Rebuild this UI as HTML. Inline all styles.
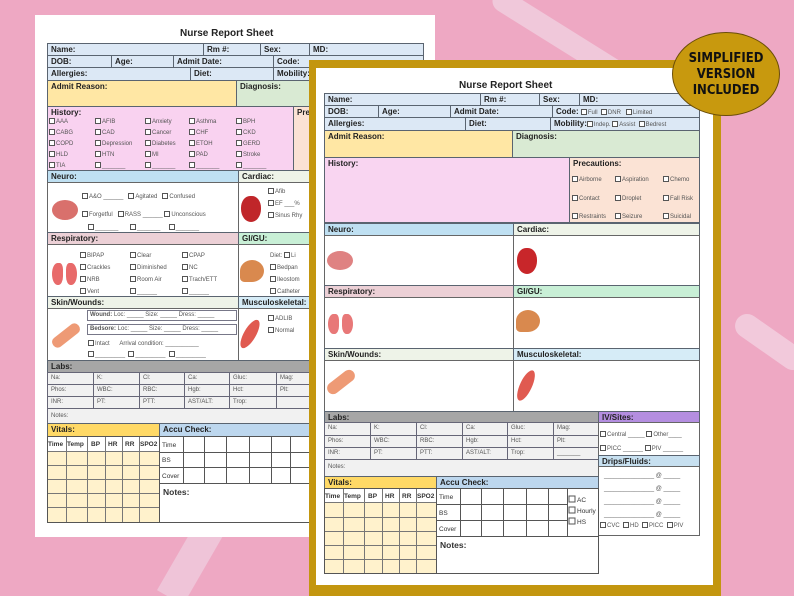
<!DOCTYPE html><html><head><meta charset="utf-8"><style>
*{margin:0;padding:0;box-sizing:border-box}
html,body{width:794px;height:596px;overflow:hidden}
body{background:#eea8c3;position:relative;font-family:"Liberation Sans",sans-serif;color:#222}
.a{position:absolute}
.b{position:absolute;border:1px solid #5a6470;font-size:8px;font-weight:bold;padding:1px 3px;line-height:9px;white-space:nowrap;overflow:hidden}
.s{position:absolute;font-size:6px;color:#555;white-space:nowrap;line-height:7px}
.c{display:inline-block;width:6px;height:6px;border:1px solid #555;margin-right:1px;vertical-align:-1px;background:#fff}
.l{position:absolute;border:1px solid #667;background:#f1f1f1;font-size:6px;color:#555;padding:1px 3px;line-height:9px}
.g{position:absolute;border:1px solid #666}
</style></head><body>
<!-- tubes -->
<div class="a" style="left:500px;top:-14px;width:190px;height:22px;background:#f0c8da;transform:rotate(32deg);transform-origin:0 0;border-radius:11px"></div>
<div class="a" style="left:730px;top:330px;width:80px;height:24px;background:#f2c9db;transform:rotate(35deg);border-radius:12px"></div>
<div class="a" style="left:150px;top:548px;width:80px;height:30px;background:#efc4d8;transform:rotate(-60deg)"></div>

<!-- BACK SHEET -->
<div class="a" style="left:35px;top:15px;width:400px;height:522px;background:#fff"></div>
<div class="a" style="left:180px;top:28px;font-size:10px;font-weight:bold">Nurse Report Sheet</div>
<div class="b" style="left:47px;top:43px;width:157px;height:13px;background:#dce8f5">Name:</div>
<div class="b" style="left:203px;top:43px;width:58px;height:13px;background:#dce8f5">Rm #:</div>
<div class="b" style="left:260px;top:43px;width:50px;height:13px;background:#dce8f5">Sex:</div>
<div class="b" style="left:309px;top:43px;width:115px;height:13px;background:#dce8f5">MD:</div>
<div class="b" style="left:47px;top:55px;width:65px;height:13px;background:#dce8f5">DOB:</div>
<div class="b" style="left:111px;top:55px;width:63px;height:13px;background:#dce8f5">Age:</div>
<div class="b" style="left:173px;top:55px;width:101px;height:13px;background:#dce8f5">Admit Date:</div>
<div class="b" style="left:273px;top:55px;width:151px;height:13px;background:#dce8f5">Code:</div>
<div class="b" style="left:47px;top:67px;width:144px;height:14px;background:#dce8f5">Allergies:</div>
<div class="b" style="left:190px;top:67px;width:84px;height:14px;background:#dce8f5">Diet:</div>
<div class="b" style="left:273px;top:67px;width:151px;height:14px;background:#dce8f5">Mobility:</div>
<div class="b" style="left:47px;top:80px;width:190px;height:27px;background:#ffe7a4">Admit Reason:</div>
<div class="b" style="left:236px;top:80px;width:188px;height:27px;background:#d9ead3">Diagnosis:</div>
<div class="b" style="left:47px;top:106px;width:247px;height:65px;background:#f9d2f0">History:</div>
<div class="b" style="left:293px;top:106px;width:131px;height:65px;background:#fbe2d4">Precautions:</div>
<div class="s" style="left:49px;top:117px;line-height:11px">
<span class="c"></span>AAA<br><span class="c"></span>CABG<br><span class="c"></span>COPD<br><span class="c"></span>HLD<br><span class="c"></span>TIA</div>
<div class="s" style="left:95px;top:117px;line-height:11px"><span class="c"></span>AFIB<br><span class="c"></span>CAD<br><span class="c"></span>Depression<br><span class="c"></span>HTN<br><span class="c"></span>_______</div>
<div class="s" style="left:145px;top:117px;line-height:11px"><span class="c"></span>Anxiety<br><span class="c"></span>Cancer<br><span class="c"></span>Diabetes<br><span class="c"></span>MI<br><span class="c"></span>_______</div>
<div class="s" style="left:189px;top:117px;line-height:11px"><span class="c"></span>Asthma<br><span class="c"></span>CHF<br><span class="c"></span>ETOH<br><span class="c"></span>PAD<br><span class="c"></span>_______</div>
<div class="s" style="left:236px;top:117px;line-height:11px"><span class="c"></span>BPH<br><span class="c"></span>CKD<br><span class="c"></span>GERD<br><span class="c"></span>Stroke<br><span class="c"></span>_______</div>
<div class="b" style="left:47px;top:170px;width:192px;height:13px;background:#bfe0f2">Neuro:</div>
<div class="b" style="left:238px;top:170px;width:186px;height:13px;background:#eef3e8">Cardiac:</div>
<div class="g" style="left:47px;top:182px;width:192px;height:51px"></div>
<div class="g" style="left:238px;top:182px;width:186px;height:51px"></div>
<div class="s" style="left:82px;top:188px;line-height:18px"><span class="c"></span>A&amp;O ______ &nbsp; <span class="c"></span>Agitated &nbsp; <span class="c"></span>Confused<br><span class="c"></span>Forgetful &nbsp; <span class="c"></span>RASS ______ <span class="c"></span>Unconscious</div>
<div class="s" style="left:88px;top:224px"><span class="c"></span>_______ &nbsp;&nbsp;&nbsp;&nbsp;&nbsp;&nbsp;<span class="c"></span>_______ &nbsp;&nbsp;&nbsp;&nbsp;<span class="c"></span>_______</div>
<div class="s" style="left:268px;top:186px;line-height:12px"><span class="c"></span>Afib<br><span class="c"></span>EF ___%<br><span class="c"></span>Sinus Rhy</div>
<div class="a" style="left:52px;top:200px;width:26px;height:20px;border-radius:50%;background:#d9706c"></div>
<div class="a" style="left:241px;top:196px;width:20px;height:26px;border-radius:45% 45% 50% 50%;background:#c0262a"></div>
<div class="b" style="left:47px;top:232px;width:192px;height:13px;background:#ecd0d6">Respiratory:</div>
<div class="b" style="left:238px;top:232px;width:186px;height:13px;background:#c8efd6">GI/GU:</div>
<div class="g" style="left:47px;top:244px;width:192px;height:53px"></div>
<div class="g" style="left:238px;top:244px;width:186px;height:53px"></div>
<div class="s" style="left:80px;top:250px;line-height:12px"><span class="c"></span>BIPAP<br><span class="c"></span>Crackles<br><span class="c"></span>NRB<br><span class="c"></span>Vent</div>
<div class="s" style="left:130px;top:250px;line-height:12px"><span class="c"></span>Clear<br><span class="c"></span>Diminished<br><span class="c"></span>Room Air<br><span class="c"></span>______</div>
<div class="s" style="left:182px;top:250px;line-height:12px"><span class="c"></span>CPAP<br><span class="c"></span>NC<br><span class="c"></span>Trach/ETT<br><span class="c"></span>______</div>
<div class="s" style="left:270px;top:250px;line-height:12px">Diet: <span class="c"></span>Li<br><span class="c"></span>Bedpan<br><span class="c"></span>Ileostom<br><span class="c"></span>Catheter</div>
<div class="a" style="left:52px;top:263px;width:11px;height:22px;border-radius:50% 30% 40% 50%;background:#e86a6a"></div>
<div class="a" style="left:66px;top:263px;width:11px;height:22px;border-radius:30% 50% 50% 40%;background:#e86a6a"></div>
<div class="a" style="left:240px;top:260px;width:24px;height:22px;border-radius:50% 50% 50% 20%;background:#d9894e"></div>
<div class="b" style="left:47px;top:296px;width:192px;height:13px;background:#eef3e8">Skin/Wounds:</div>
<div class="b" style="left:238px;top:296px;width:186px;height:13px;background:#d6ecf7">Musculoskeletal:</div>
<div class="g" style="left:47px;top:308px;width:192px;height:53px"></div>
<div class="g" style="left:238px;top:308px;width:186px;height:53px"></div>
<div class="s" style="left:87px;top:310px;border:1px solid #778;padding:1px 2px;width:150px"><b>Wound:</b> Loc: _____ Size: _____ Dress: _____</div>
<div class="s" style="left:87px;top:324px;border:1px solid #778;padding:1px 2px;width:150px"><b>Bedsore:</b> Loc: _____ Size: _____ Dress: _____</div>
<div class="s" style="left:88px;top:339px;line-height:11px"><span class="c"></span>Intact &nbsp;&nbsp;&nbsp;&nbsp; Arrival condition: __________<br><span class="c"></span>_________ &nbsp;<span class="c"></span>_________ &nbsp;<span class="c"></span>_________</div>
<div class="s" style="left:268px;top:313px;line-height:12px"><span class="c"></span>ADLIB<br><span class="c"></span>Normal</div>
<div class="a" style="left:50px;top:330px;width:32px;height:11px;border-radius:5px;background:#ee9a75;transform:rotate(-38deg)"></div>
<div class="a" style="left:244px;top:318px;width:12px;height:32px;border-radius:50%;background:#e05a50;transform:rotate(30deg)"></div>
<div class="b" style="left:47px;top:360px;width:377px;height:13px;background:#a6a6a6">Labs:</div>
<div class="l" style="left:47px;top:372px;width:47px;height:13px">Na:</div><div class="l" style="left:93px;top:372px;width:47px;height:13px">K:</div><div class="l" style="left:139px;top:372px;width:46px;height:13px">Cl:</div><div class="l" style="left:184px;top:372px;width:46px;height:13px">Ca:</div><div class="l" style="left:229px;top:372px;width:48px;height:13px">Gluc:</div><div class="l" style="left:276px;top:372px;width:48px;height:13px">Mag:</div>
<div class="l" style="left:47px;top:384px;width:47px;height:13px">Phos:</div><div class="l" style="left:93px;top:384px;width:47px;height:13px">WBC:</div><div class="l" style="left:139px;top:384px;width:46px;height:13px">RBC:</div><div class="l" style="left:184px;top:384px;width:46px;height:13px">Hgb:</div><div class="l" style="left:229px;top:384px;width:48px;height:13px">Hct:</div><div class="l" style="left:276px;top:384px;width:48px;height:13px">Plt:</div>
<div class="l" style="left:47px;top:396px;width:47px;height:13px">INR:</div><div class="l" style="left:93px;top:396px;width:47px;height:13px">PT:</div><div class="l" style="left:139px;top:396px;width:46px;height:13px">PTT:</div><div class="l" style="left:184px;top:396px;width:46px;height:13px">AST/ALT:</div><div class="l" style="left:229px;top:396px;width:48px;height:13px">Trop:</div><div class="l" style="left:276px;top:396px;width:48px;height:13px"></div>
<div class="l" style="left:47px;top:408px;width:377px;height:16px;line-height:12px">Notes:</div>
<div class="b" style="left:47px;top:423px;width:113px;height:14px;background:#ffd966">Vitals:</div>
<div class="b" style="left:159px;top:423px;width:265px;height:14px;background:#bdd7ee">Accu Check:</div>
<svg class="a" style="left:47px;top:436px" width="113" height="87">
<rect x="0" y="0" width="113" height="87" fill="#fff2cc"/><rect x="0" y="0" width="113" height="15" fill="#fff"/>
<g stroke="#777" fill="none"><path d="M19.5 0V87M40.5 0V87M58.5 0V87M75.5 0V87M92.5 0V87M0 15.5H113M0 29.5H113M0 43.5H113M0 57.5H113M0 71.5H113"/><rect x="0.5" y="0.5" width="112" height="86" stroke="#555"/></g>
<g font-family="Liberation Sans" font-size="6.5" font-weight="bold" fill="#333"><text x="1" y="10">Time</text><text x="20" y="10">Temp</text><text x="44" y="10">BP</text><text x="61" y="10">HR</text><text x="78" y="10">RR</text><text x="93" y="10">SPO2</text></g></svg>
<svg class="a" style="left:159px;top:436px" width="265" height="87">
<g stroke="#555" fill="none"><path d="M24.5 0V47M45.5 0V47M67.5 0V47M90.5 0V47M112.5 0V47M131.5 0V47M0 16.5H265M0 31.5H265M0 47.5H265"/><rect x="0.5" y="0.5" width="264" height="86"/></g>
<g font-family="Liberation Sans" font-size="6.5" fill="#333"><text x="3" y="11">Time</text><text x="3" y="26">BS</text><text x="3" y="42">Cover</text><text x="4" y="59" font-size="8.5" font-weight="bold">Notes:</text></g></svg>

<!-- FRONT SHEET -->
<div class="a" style="left:309px;top:60px;width:412px;height:536px;background:#c3960f"></div>
<div class="a" style="left:316px;top:68px;width:397px;height:517px;background:#fff"></div>
<div class="a" style="left:459px;top:80px;font-size:10px;font-weight:bold">Nurse Report Sheet</div>
<div class="b" style="left:324px;top:93px;width:157px;height:13px;background:#dce8f5">Name:</div>
<div class="b" style="left:480px;top:93px;width:60px;height:13px;background:#dce8f5">Rm #:</div>
<div class="b" style="left:539px;top:93px;width:41px;height:13px;background:#dce8f5">Sex:</div>
<div class="b" style="left:579px;top:93px;width:121px;height:13px;background:#dce8f5">MD:</div>
<div class="b" style="left:324px;top:105px;width:55px;height:13px;background:#dce8f5">DOB:</div>
<div class="b" style="left:378px;top:105px;width:73px;height:13px;background:#dce8f5">Age:</div>
<div class="b" style="left:450px;top:105px;width:103px;height:13px;background:#dce8f5">Admit Date:</div>
<div class="b" style="left:552px;top:105px;width:148px;height:13px;background:#dce8f5">Code: <span style="font-weight:normal;font-size:6px;color:#555"><span class="c"></span>Full &nbsp;<span class="c"></span>DNR &nbsp; <span class="c"></span>Limited</span></div>
<div class="b" style="left:324px;top:117px;width:142px;height:14px;background:#dce8f5">Allergies:</div>
<div class="b" style="left:465px;top:117px;width:86px;height:14px;background:#dce8f5">Diet:</div>
<div class="b" style="left:550px;top:117px;width:150px;height:14px;background:#dce8f5">Mobility:<span style="font-weight:normal;font-size:6px;color:#555"><span class="c"></span>Indep. <span class="c"></span>Assist &nbsp;<span class="c"></span>Bedrest</span></div>
<div class="b" style="left:324px;top:130px;width:189px;height:28px;background:#ffe7a4">Admit Reason:</div>
<div class="b" style="left:512px;top:130px;width:188px;height:28px;background:#d9ead3">Diagnosis:</div>
<div class="b" style="left:324px;top:157px;width:246px;height:66px;background:#f9d5f1">History:</div>
<div class="b" style="left:569px;top:157px;width:131px;height:66px;background:#fbe3d5">Precautions:</div>
<div class="s" style="left:572px;top:171px;line-height:18.5px"><span class="c"></span>Airborne<br><span class="c"></span>Contact<br><span class="c"></span>Restraints</div>
<div class="s" style="left:615px;top:171px;line-height:18.5px"><span class="c"></span>Aspiration<br><span class="c"></span>Droplet<br><span class="c"></span>Seizure</div>
<div class="s" style="left:663px;top:171px;line-height:18.5px"><span class="c"></span>Chemo<br><span class="c"></span>Fall Risk<br><span class="c"></span>Suicidal</div>
<div class="b" style="left:324px;top:223px;width:190px;height:13px;background:#bfe0f2">Neuro:</div>
<div class="b" style="left:513px;top:223px;width:187px;height:13px;background:#eef3e8">Cardiac:</div>
<div class="g" style="left:324px;top:235px;width:190px;height:51px"></div>
<div class="g" style="left:513px;top:235px;width:187px;height:51px"></div>
<div class="a" style="left:327px;top:251px;width:26px;height:19px;border-radius:50%;background:#df8282"></div>
<div class="a" style="left:517px;top:248px;width:20px;height:26px;border-radius:45% 45% 50% 50%;background:#c8262a"></div>
<div class="b" style="left:324px;top:285px;width:190px;height:13px;background:#ecd0d6">Respiratory:</div>
<div class="b" style="left:513px;top:285px;width:187px;height:13px;background:#c8efd6">GI/GU:</div>
<div class="g" style="left:324px;top:297px;width:190px;height:52px"></div>
<div class="g" style="left:513px;top:297px;width:187px;height:52px"></div>
<div class="a" style="left:328px;top:314px;width:11px;height:20px;border-radius:50% 30% 40% 50%;background:#e87878"></div>
<div class="a" style="left:342px;top:314px;width:11px;height:20px;border-radius:30% 50% 50% 40%;background:#e87878"></div>
<div class="a" style="left:516px;top:310px;width:24px;height:22px;border-radius:50% 50% 50% 20%;background:#d9894e"></div>
<div class="b" style="left:324px;top:348px;width:190px;height:13px;background:#eef3e8">Skin/Wounds:</div>
<div class="b" style="left:513px;top:348px;width:187px;height:13px;background:#d6ecf7">Musculoskeletal:</div>
<div class="g" style="left:324px;top:360px;width:190px;height:52px"></div>
<div class="g" style="left:513px;top:360px;width:187px;height:52px"></div>
<div class="a" style="left:325px;top:376px;width:32px;height:12px;border-radius:6px;background:#ee9a75;transform:rotate(-38deg)"></div>
<div class="a" style="left:520px;top:369px;width:12px;height:33px;border-radius:50%;background:#e05a50;transform:rotate(25deg)"></div>
<div class="b" style="left:324px;top:411px;width:275px;height:12px;background:#a6a6a6">Labs:</div>
<div class="b" style="left:598px;top:411px;width:102px;height:12px;background:#b48ee0">IV/Sites:</div>
<div class="l" style="left:324px;top:422px;width:47px;height:14px">Na:</div><div class="l" style="left:370px;top:422px;width:47px;height:14px">K:</div><div class="l" style="left:416px;top:422px;width:47px;height:14px">Cl:</div><div class="l" style="left:462px;top:422px;width:46px;height:14px">Ca:</div><div class="l" style="left:507px;top:422px;width:47px;height:14px">Gluc:</div><div class="l" style="left:553px;top:422px;width:46px;height:14px">Mag:</div>
<div class="l" style="left:324px;top:435px;width:47px;height:13px">Phos:</div><div class="l" style="left:370px;top:435px;width:47px;height:13px">WBC:</div><div class="l" style="left:416px;top:435px;width:47px;height:13px">RBC:</div><div class="l" style="left:462px;top:435px;width:46px;height:13px">Hgb:</div><div class="l" style="left:507px;top:435px;width:47px;height:13px">Hct:</div><div class="l" style="left:553px;top:435px;width:46px;height:13px">Plt:</div>
<div class="l" style="left:324px;top:447px;width:47px;height:13px">INR:</div><div class="l" style="left:370px;top:447px;width:47px;height:13px">PT:</div><div class="l" style="left:416px;top:447px;width:47px;height:13px">PTT:</div><div class="l" style="left:462px;top:447px;width:46px;height:13px">AST/ALT:</div><div class="l" style="left:507px;top:447px;width:47px;height:13px">Trop:</div><div class="l" style="left:553px;top:447px;width:46px;height:13px">_______</div>
<div class="l" style="left:324px;top:459px;width:275px;height:18px;line-height:13px">Notes:</div>
<div class="g" style="left:598px;top:422px;width:102px;height:34px"></div>
<div class="s" style="left:600px;top:428px;line-height:14px"><span class="c"></span>Central _____ <span class="c"></span>Other____<br><span class="c"></span>PICC ______ <span class="c"></span>PIV ______</div>
<div class="b" style="left:598px;top:455px;width:102px;height:12px;background:#c7e0f0">Drips/Fluids:</div>
<div class="g" style="left:598px;top:466px;width:102px;height:70px"></div>
<div class="s" style="left:604px;top:470px;line-height:13px">_______________ @ _____<br>_______________ @ _____<br>_______________ @ _____<br>_______________ @ _____</div>
<div class="s" style="left:600px;top:522px"><span class="c"></span>CVC &nbsp;<span class="c"></span>HD &nbsp;<span class="c"></span>PICC &nbsp;<span class="c"></span>PIV</div>
<div class="b" style="left:324px;top:476px;width:113px;height:13px;background:#ffd966">Vitals:</div>
<div class="b" style="left:436px;top:476px;width:163px;height:13px;background:#bdd7ee">Accu Check:</div>
<svg class="a" style="left:324px;top:488px" width="113" height="86">
<rect x="0" y="0" width="113" height="86" fill="#fff2cc"/><rect x="0" y="0" width="113" height="14" fill="#fff"/>
<g stroke="#777" stroke-width="1" fill="none">
<path d="M19.5 0V86M40.5 0V86M58.5 0V86M75.5 0V86M92.5 0V86M0 14.5H113M0 29.5H113M0 43.5H113M0 57.5H113M0 71.5H113"/>
<rect x="0.5" y="0.5" width="112" height="85" stroke="#555"/></g>
<g font-family="Liberation Sans" font-size="6.5" font-weight="bold" fill="#333">
<text x="1" y="10">Time</text><text x="20" y="10">Temp</text><text x="44" y="10">BP</text><text x="61" y="10">HR</text><text x="78" y="10">RR</text><text x="93" y="10">SPO2</text></g></svg>
<svg class="a" style="left:436px;top:488px" width="163" height="86">
<g stroke="#555" stroke-width="1" fill="none">
<path d="M24.5 0V48M45.5 0V48M67.5 0V48M90.5 0V48M112.5 0V48M131.5 0V48M0 16.5H131M0 32.5H131M0 48.5H163"/>
<rect x="0.5" y="0.5" width="162" height="85"/></g>
<g font-family="Liberation Sans" font-size="6.5" fill="#333"><text x="3" y="11">Time</text><text x="3" y="27">BS</text><text x="3" y="43">Cover</text>
<rect x="133" y="8" width="6" height="6" fill="none" stroke="#555"/><text x="141" y="14">AC</text>
<rect x="133" y="19" width="6" height="6" fill="none" stroke="#555"/><text x="141" y="25">Hourly</text>
<rect x="133" y="30" width="6" height="6" fill="none" stroke="#555"/><text x="141" y="36">HS</text>
<text x="4" y="60" font-size="8.5" font-weight="bold">Notes:</text></g></svg>

<!-- BADGE -->
<div class="a" style="left:672px;top:32px;width:108px;height:84px;border-radius:50%;background:#c8990e;border:1.5px solid #6b4e08;text-align:center;font-size:13px;font-weight:bold;line-height:16px;padding-top:18px;color:#111;font-family:'DejaVu Sans Condensed','Liberation Sans',sans-serif">SIMPLIFIED<br>VERSION<br>INCLUDED</div>
</body></html>
